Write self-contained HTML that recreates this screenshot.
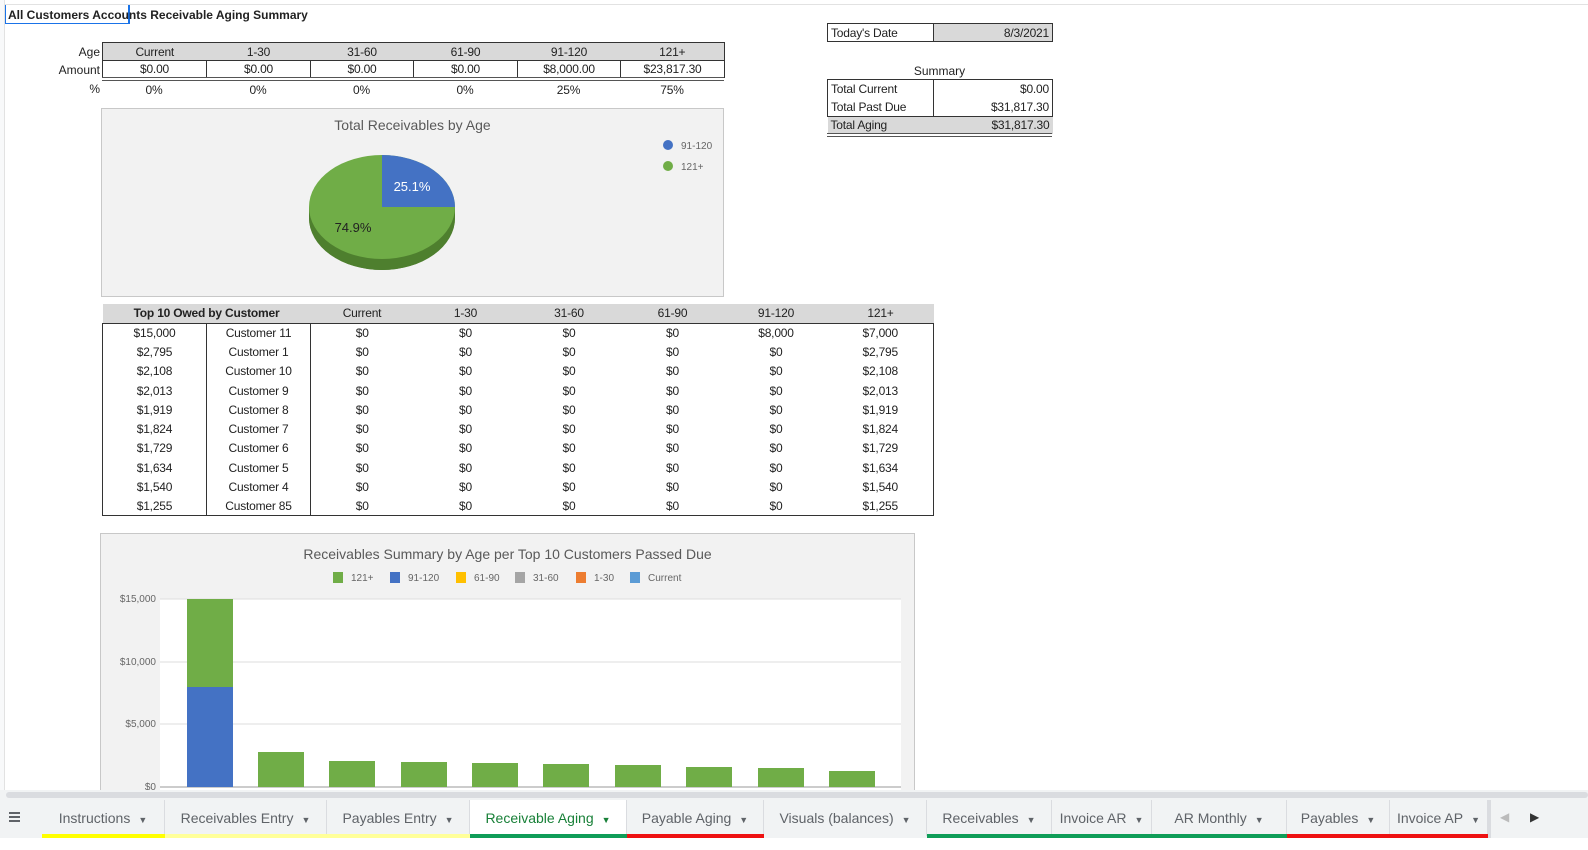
<!DOCTYPE html>
<html><head><meta charset="utf-8"><style>
*{margin:0;padding:0;box-sizing:border-box}
body{width:1588px;height:850px;overflow:hidden;background:#fff;font-family:"Liberation Sans",sans-serif;font-size:12px;color:#222;position:relative}
.a{position:absolute}
table{border-collapse:collapse;table-layout:fixed;position:absolute}
td{padding:0;text-align:center;white-space:nowrap;overflow:hidden;font-size:12px;letter-spacing:-0.2px}
.g{background:#d9d9d9}
.tab{position:absolute;top:800px;height:36px;line-height:36px;font-size:14px;color:#5f6368;text-align:center;border-right:1px solid #dadce0}
.tab i{font-style:normal;font-size:9px;margin-left:8px;color:#5f6368}
.bar{position:absolute;height:4px;top:834px}
</style></head><body>
<!-- sheet grid hints -->
<div class="a" style="left:0;top:0;width:1588px;height:5px;border-bottom:1px solid #e2e2e2"></div>
<div class="a" style="left:0;top:0;width:5px;height:790px;border-right:1px solid #e2e2e2;background:#f8f9fa"></div>
<div class="a" style="left:5px;top:5px;width:125px;height:19px;border:1px solid #1a73e8;border-top:none;border-right:2px solid #1a73e8"></div>
<div class="a" style="left:8px;top:8px;font-weight:bold;font-size:12px">All Customers Accounts Receivable Aging Summary</div>

<!-- top age table -->
<div class="a" style="left:40px;top:45px;width:60px;text-align:right">Age</div>
<div class="a" style="left:40px;top:63px;width:60px;text-align:right">Amount</div>
<div class="a" style="left:40px;top:82px;width:60px;text-align:right">%</div>
<table style="left:102px;top:42px;width:622px">
<colgroup><col style="width:104px"><col style="width:104px"><col style="width:103px"><col style="width:104px"><col style="width:103px"><col style="width:104px"></colgroup>
<tr class="g" style="height:18px;border:1px solid #333"><td>Current</td><td>1-30</td><td>31-60</td><td>61-90</td><td>91-120</td><td>121+</td></tr>
<tr style="height:17px;border:1px solid #333"><td style="border-right:1px solid #333">$0.00</td><td style="border-right:1px solid #333">$0.00</td><td style="border-right:1px solid #333">$0.00</td><td style="border-right:1px solid #333">$0.00</td><td style="border-right:1px solid #333">$8,000.00</td><td>$23,817.30</td></tr>
</table>
<div class="a" style="left:102px;top:77px;width:622px;height:4px;border-top:1px solid #555;border-bottom:1px solid #555"></div>
<table style="left:102px;top:81px;width:622px"><colgroup><col style="width:104px"><col style="width:104px"><col style="width:103px"><col style="width:104px"><col style="width:103px"><col style="width:104px"></colgroup>
<tr style="height:18px"><td>0%</td><td>0%</td><td>0%</td><td>0%</td><td>25%</td><td>75%</td></tr></table>

<!-- today's date -->
<table style="left:827px;top:23px;width:225px;border:1px solid #333"><colgroup><col style="width:106px"><col style="width:119px"></colgroup>
<tr style="height:18px"><td style="text-align:left;padding-left:3px;border-right:1px solid #333">Today's Date</td><td class="g" style="text-align:right;padding-right:3px">8/3/2021</td></tr></table>
<div class="a" style="left:827px;top:64px;width:225px;text-align:center">Summary</div>
<table style="left:827px;top:79px;width:225px"><colgroup><col style="width:106px"><col style="width:119px"></colgroup>
<tr style="height:19px;border:1px solid #333;border-bottom:none"><td style="text-align:left;padding-left:3px;border-right:1px solid #333">Total Current</td><td style="text-align:right;padding-right:3px">$0.00</td></tr>
<tr style="height:18px;border:1px solid #333;border-top:none"><td style="text-align:left;padding-left:3px;border-right:1px solid #333">Total Past Due</td><td style="text-align:right;padding-right:3px">$31,817.30</td></tr>
<tr class="g" style="height:17px"><td style="text-align:left;padding-left:3px">Total Aging</td><td style="text-align:right;padding-right:3px">$31,817.30</td></tr></table>
<div class="a" style="left:827px;top:133px;width:225px;height:4px;border-top:1px solid #555;border-bottom:1px solid #555"></div>

<!-- pie chart -->
<div class="a" style="left:101px;top:108px;width:623px;height:189px;background:#f2f2f2;border:1px solid #c8c8c8"></div>
<div class="a" style="left:101px;top:117px;width:623px;text-align:center;font-size:14px;color:#595959">Total Receivables by Age</div>
<svg class="a" style="left:101px;top:108px" width="623" height="189">
<path d="M208 99 v11 a73 52 0 0 0 146 0 v-11 z" fill="#4e7f2e"/>
<ellipse cx="281" cy="110" rx="73" ry="52" fill="#4e7f2e"/>
<ellipse cx="281" cy="99" rx="73" ry="52" fill="#70ad47"/>
<path d="M281 99 V47 A73 52 0 0 1 354 99 Z" fill="#4472c4"/>
<text x="311" y="83" font-family="Liberation Sans" font-size="13" fill="#fff" text-anchor="middle">25.1%</text>
<text x="252" y="124" font-family="Liberation Sans" font-size="13" fill="#222" text-anchor="middle">74.9%</text>
<circle cx="567" cy="37" r="5" fill="#4472c4"/><text x="580" y="41" font-family="Liberation Sans" font-size="10" fill="#666">91-120</text>
<circle cx="567" cy="58" r="5" fill="#70ad47"/><text x="580" y="62" font-family="Liberation Sans" font-size="10" fill="#666">121+</text>
</svg>

<!-- top 10 table -->
<table style="left:102px;top:304px;width:831px">
<colgroup><col style="width:104px"><col style="width:104px"><col style="width:103px"><col style="width:104px"><col style="width:103px"><col style="width:104px"><col style="width:103px"><col style="width:106px"></colgroup>
<tr class="g" style="height:19px;border-bottom:1px solid #333"><td colspan="2" style="font-weight:bold">Top 10 Owed by Customer</td><td>Current</td><td>1-30</td><td>31-60</td><td>61-90</td><td>91-120</td><td>121+</td></tr>
<tbody style="border:1px solid #333">
<tr style="height:19.3px"><td style="border-right:1px solid #333">$15,000</td><td style="border-right:1px solid #333">Customer 11</td><td>$0</td><td>$0</td><td>$0</td><td>$0</td><td>$8,000</td><td>$7,000</td></tr>
<tr style="height:19.3px"><td style="border-right:1px solid #333">$2,795</td><td style="border-right:1px solid #333">Customer 1</td><td>$0</td><td>$0</td><td>$0</td><td>$0</td><td>$0</td><td>$2,795</td></tr>
<tr style="height:19.3px"><td style="border-right:1px solid #333">$2,108</td><td style="border-right:1px solid #333">Customer 10</td><td>$0</td><td>$0</td><td>$0</td><td>$0</td><td>$0</td><td>$2,108</td></tr>
<tr style="height:19.3px"><td style="border-right:1px solid #333">$2,013</td><td style="border-right:1px solid #333">Customer 9</td><td>$0</td><td>$0</td><td>$0</td><td>$0</td><td>$0</td><td>$2,013</td></tr>
<tr style="height:19.3px"><td style="border-right:1px solid #333">$1,919</td><td style="border-right:1px solid #333">Customer 8</td><td>$0</td><td>$0</td><td>$0</td><td>$0</td><td>$0</td><td>$1,919</td></tr>
<tr style="height:19.3px"><td style="border-right:1px solid #333">$1,824</td><td style="border-right:1px solid #333">Customer 7</td><td>$0</td><td>$0</td><td>$0</td><td>$0</td><td>$0</td><td>$1,824</td></tr>
<tr style="height:19.3px"><td style="border-right:1px solid #333">$1,729</td><td style="border-right:1px solid #333">Customer 6</td><td>$0</td><td>$0</td><td>$0</td><td>$0</td><td>$0</td><td>$1,729</td></tr>
<tr style="height:19.3px"><td style="border-right:1px solid #333">$1,634</td><td style="border-right:1px solid #333">Customer 5</td><td>$0</td><td>$0</td><td>$0</td><td>$0</td><td>$0</td><td>$1,634</td></tr>
<tr style="height:19.3px"><td style="border-right:1px solid #333">$1,540</td><td style="border-right:1px solid #333">Customer 4</td><td>$0</td><td>$0</td><td>$0</td><td>$0</td><td>$0</td><td>$1,540</td></tr>
<tr style="height:19.3px"><td style="border-right:1px solid #333">$1,255</td><td style="border-right:1px solid #333">Customer 85</td><td>$0</td><td>$0</td><td>$0</td><td>$0</td><td>$0</td><td>$1,255</td></tr>
</tbody></table>

<!-- bar chart -->
<div class="a" style="left:100px;top:533px;width:815px;height:262px;background:#f2f2f2;border:1px solid #c8c8c8;border-bottom:none"></div>
<div class="a" style="left:100px;top:546px;width:815px;text-align:center;font-size:14px;color:#595959">Receivables Summary by Age per Top 10 Customers Passed Due</div>
<svg class="a" style="left:100px;top:533px" width="815" height="257" font-family="Liberation Sans" font-size="10" fill="#666">
<rect x="233" y="39" width="10" height="11" fill="#70ad47"/><text x="251" y="48">121+</text>
<rect x="290" y="39" width="10" height="11" fill="#4472c4"/><text x="308" y="48">91-120</text>
<rect x="356" y="39" width="10" height="11" fill="#ffc000"/><text x="374" y="48">61-90</text>
<rect x="415" y="39" width="10" height="11" fill="#a5a5a5"/><text x="433" y="48">31-60</text>
<rect x="476" y="39" width="10" height="11" fill="#ed7d31"/><text x="494" y="48">1-30</text>
<rect x="530" y="39" width="10" height="11" fill="#5b9bd5"/><text x="548" y="48">Current</text>
<rect x="60" y="66" width="741" height="191" fill="#fff"/>
<line x1="60" y1="66" x2="801" y2="66" stroke="#ddd"/><line x1="60" y1="129" x2="801" y2="129" stroke="#ddd"/><line x1="60" y1="191" x2="801" y2="191" stroke="#ddd"/><line x1="60" y1="254" x2="801" y2="254" stroke="#999"/>
<text x="56" y="69" text-anchor="end">$15,000</text><text x="56" y="132" text-anchor="end">$10,000</text><text x="56" y="194" text-anchor="end">$5,000</text><text x="56" y="257" text-anchor="end">$0</text>
<g fill="#70ad47">
<rect x="87" y="154" width="46" height="100" fill="#4472c4"/>
<rect x="87" y="66" width="46" height="88"/>
<rect x="158" y="219" width="46" height="35"/>
<rect x="229" y="228" width="46" height="26"/>
<rect x="301" y="229" width="46" height="25"/>
<rect x="372" y="230" width="46" height="24"/>
<rect x="443" y="231" width="46" height="23"/>
<rect x="515" y="232" width="46" height="22"/>
<rect x="586" y="234" width="46" height="20"/>
<rect x="658" y="235" width="46" height="19"/>
<rect x="729" y="238" width="46" height="16"/>
</g></svg>

<!-- scrollbar and tabs -->
<div class="a" style="left:0;top:790px;width:1588px;height:10px;background:#f1f3f4"></div>
<div class="a" style="left:6px;top:792px;width:1582px;height:6px;background:#dadce0;border-radius:3px"></div>
<div class="a" style="left:0;top:800px;width:1588px;height:38px;background:#f1f3f4"></div>
<div class="a" style="left:9px;top:812px;width:11px;height:10px;border-top:2px solid #5f6368;border-bottom:2px solid #5f6368"><div style="margin-top:2px;height:2px;background:#5f6368"></div></div>
<div class="tab" style="left:42px;width:123px">Instructions<i>▼</i></div>
<div class="tab" style="left:165px;width:162px">Receivables Entry<i>▼</i></div>
<div class="tab" style="left:327px;width:143px">Payables Entry<i>▼</i></div>
<div class="tab" style="left:470px;width:157px;background:#fff;color:#188038">Receivable Aging<i style="color:#188038">▼</i></div>
<div class="tab" style="left:627px;width:137px">Payable Aging<i>▼</i></div>
<div class="tab" style="left:764px;width:163px">Visuals (balances)<i>▼</i></div>
<div class="tab" style="left:927px;width:125px">Receivables<i>▼</i></div>
<div class="tab" style="left:1052px;width:100px">Invoice AR<i>▼</i></div>
<div class="tab" style="left:1152px;width:135px">AR Monthly<i>▼</i></div>
<div class="tab" style="left:1287px;width:103px">Payables<i>▼</i></div>
<div class="tab" style="left:1390px;width:98px">Invoice AP<i>▼</i></div>
<div class="a" style="left:1488px;top:800px;width:3px;height:38px;background:#dadce0"></div>
<div class="a" style="left:1500px;top:810px;font-size:12px;color:#bbb">◀</div>
<div class="a" style="left:1530px;top:810px;font-size:12px;color:#333">▶</div>
<div class="bar" style="left:42px;width:123px;background:#ffff00"></div>
<div class="bar" style="left:165px;width:162px;background:#ffff99"></div>
<div class="bar" style="left:327px;width:143px;background:#ffff99"></div>
<div class="bar" style="left:470px;width:157px;background:#0f9d58"></div>
<div class="bar" style="left:627px;width:137px;background:#ee1111"></div>
<div class="bar" style="left:927px;width:125px;background:#0f9d58"></div>
<div class="bar" style="left:1052px;width:100px;background:#0f9d58"></div>
<div class="bar" style="left:1152px;width:135px;background:#0f9d58"></div>
<div class="bar" style="left:1287px;width:103px;background:#ee1111"></div>
<div class="bar" style="left:1390px;width:98px;background:#ee1111"></div>
</body></html>
